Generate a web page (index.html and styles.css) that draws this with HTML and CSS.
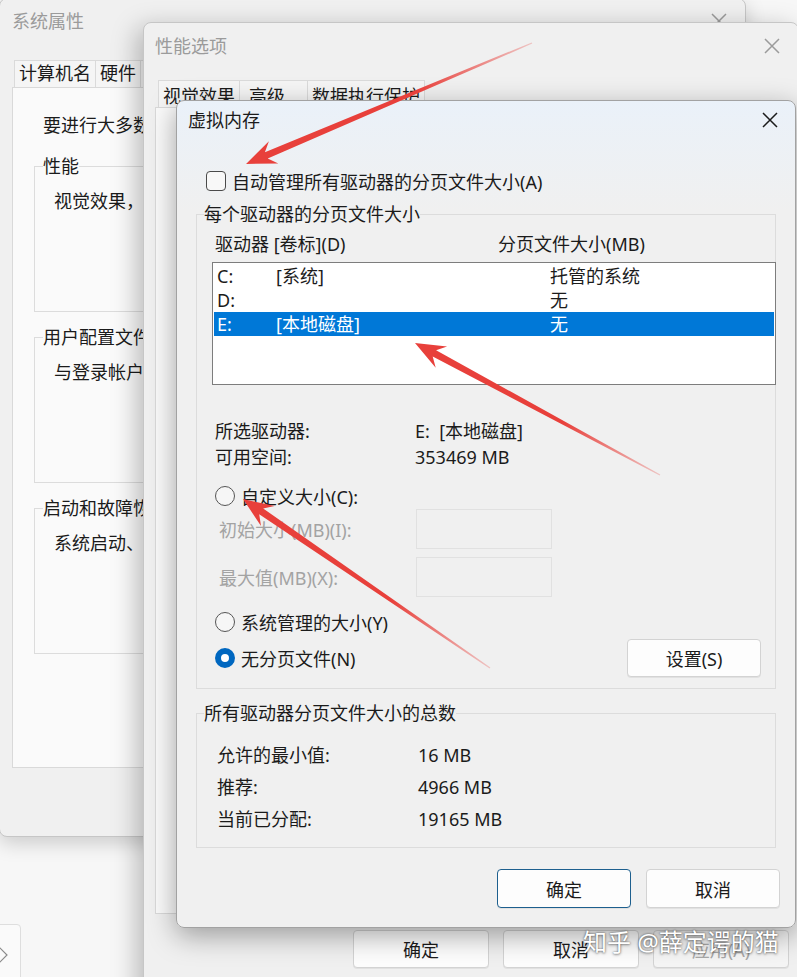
FILE: index.html
```html
<!DOCTYPE html>
<html lang="zh-CN">
  <head>
    <meta charset="UTF-8" />
    <meta name="viewport" content="width=device-width, initial-scale=1.0" />
    <title>虚拟内存</title>
    <link rel="stylesheet" href="styles.css">
  </head>
  <body>
    <div class="desktop">

      <!-- 系统属性 -->
      <div class="window inactive win-system">
        <div class="titlebar">
          <span class="title">系统属性</span>
          <svg class="close" viewBox="0 0 16 16"><path d="M1 1L15 15M15 1L1 15" /></svg>
        </div>
        <div class="tabs">
          <span class="tab">计算机名</span>
          <span class="tab">硬件</span>
          <span class="tab">高级</span>
          <span class="tab">系统保护</span>
          <span class="tab">远程</span>
        </div>
        <div class="panel">
          <p class="intro">要进行大多数更改，你必须作为管理员登录。</p>
          <fieldset class="sys-group">
            <legend>性能</legend>
            <p>视觉效果，处理器计划，内存使用，以及虚拟内存</p>
          </fieldset>
          <fieldset class="sys-group">
            <legend>用户配置文件</legend>
            <p>与登录帐户相关的桌面设置</p>
          </fieldset>
          <fieldset class="sys-group">
            <legend>启动和故障恢复</legend>
            <p>系统启动、系统故障和调试信息</p>
          </fieldset>
        </div>
      </div>

      <!-- 性能选项 -->
      <div class="window inactive win-perf">
        <div class="titlebar">
          <span class="title">性能选项</span>
          <svg class="close" viewBox="0 0 16 16"><path d="M1 1L15 15M15 1L1 15" /></svg>
        </div>
        <div class="tabs">
          <span class="tab">视觉效果</span>
          <span class="tab tab-wide">高级</span>
          <span class="tab">数据执行保护</span>
        </div>
        <div class="panel"></div>
        <div class="footer">
          <span class="btn">确定</span>
          <span class="btn">取消</span>
          <span class="btn btn-disabled">应用(A)</span>
        </div>
      </div>

      <!-- 虚拟内存 -->
      <div class="window win-vm">
        <div class="titlebar">
          <span class="title">虚拟内存</span>
          <svg class="close" viewBox="0 0 16 16"><path d="M1 1L15 15M15 1L1 15" /></svg>
        </div>
        <div class="vm-body">
          <div class="check-row">
            <span class="checkbox"></span>
            <span>自动管理所有驱动器的分页文件大小(A)</span>
          </div>

          <fieldset class="vm-group">
            <legend>每个驱动器的分页文件大小</legend>
            <div class="list-head">
              <span>驱动器 [卷标](D)</span>
              <span>分页文件大小(MB)</span>
            </div>
            <div class="listbox">
              <div class="list-row"><span>C:</span><span>[系统]</span><span>托管的系统</span></div>
              <div class="list-row"><span>D:</span><span></span><span>无</span></div>
              <div class="list-row selected"><span>E:</span><span>[本地磁盘]</span><span>无</span></div>
            </div>
            <div class="info">
              <span>所选驱动器:</span><span>E:&nbsp; [本地磁盘]</span>
              <span>可用空间:</span><span>353469 MB</span>
            </div>
            <div class="option option-custom">
              <span class="radio"></span>
              <span>自定义大小(C):</span>
            </div>
            <div class="size-row">
              <span>初始大小(MB)(I):</span>
              <span class="field"></span>
            </div>
            <div class="size-row size-row-max">
              <span>最大值(MB)(X):</span>
              <span class="field"></span>
            </div>
            <div class="option option-system">
              <span class="radio"></span>
              <span>系统管理的大小(Y)</span>
            </div>
            <div class="last-row">
              <div class="option">
                <span class="radio checked"></span>
                <span>无分页文件(N)</span>
              </div>
              <span class="btn btn-set">设置(S)</span>
            </div>
          </fieldset>

          <fieldset class="vm-group totals">
            <legend>所有驱动器分页文件大小的总数</legend>
            <div class="totals-grid">
              <span>允许的最小值:</span><span>16 MB</span>
              <span>推荐:</span><span>4966 MB</span>
              <span>当前已分配:</span><span>19165 MB</span>
            </div>
          </fieldset>

          <div class="footer vm-footer">
            <span class="btn btn-default">确定</span>
            <span class="btn">取消</span>
          </div>
        </div>
      </div>

      <!-- 左下角的按钮 -->
      <div class="corner-btn">
        <svg viewBox="0 0 41 60"><path d="M17 21L26 30L17 39" /></svg>
      </div>

      <!-- 标注箭头 -->
      <svg class="arrows" viewBox="0 0 797 977">
        <defs>
          <linearGradient id="fade1" gradientUnits="userSpaceOnUse" x1="532" y1="43" x2="246" y2="164">
            <stop offset="0" stop-color="#e8403b" stop-opacity="0.25" />
            <stop offset="0.4" stop-color="#e8403b" />
          </linearGradient>
          <linearGradient id="fade2" gradientUnits="userSpaceOnUse" x1="660" y1="475" x2="415" y2="343">
            <stop offset="0" stop-color="#e8403b" stop-opacity="0.25" />
            <stop offset="0.4" stop-color="#e8403b" />
          </linearGradient>
          <linearGradient id="fade3" gradientUnits="userSpaceOnUse" x1="490" y1="668" x2="243" y2="499">
            <stop offset="0" stop-color="#e8403b" stop-opacity="0.25" />
            <stop offset="0.4" stop-color="#e8403b" />
          </linearGradient>
        </defs>
        <polygon fill="url(#fade1)" points="531.7,42.4 264.9,152.2 268.9,141.3 246,164 278.3,163.4 267.7,158.6 532.3,43.6" />
        <polygon fill="url(#fade2)" points="660.3,474.4 436.1,350.3 447.1,346.6 415,343 435.7,367.8 432.7,356.5 659.7,475.6" />
        <polygon fill="url(#fade3)" points="490.4,667.4 263.2,508.5 274.6,506.1 243,499 261.0,525.9 259.2,514.3 489.6,668.6" />
      </svg>

      <div class="watermark">知乎 @薛定谔的猫</div>
    </div>
  </body>
</html>
```

FILE: styles.css
```css
* {
    margin: 0;
    padding: 0;
    box-sizing: border-box;
}

body {
    font-family: "Noto Sans", "Noto Sans CJK SC", sans-serif;
    font-size: 18px;
    color: #1b1b1b;
    background-color: #f7f7f7;
}

.desktop {
    position: relative;
    width: 797px;
    height: 977px;
    overflow: hidden;
    background-color: #f7f7f7;
}

/* окна */
.window {
    position: absolute;
    display: flex;
    flex-direction: column;
    background-color: #f0f0f0;
    border: 1px solid #c6c6c6;
    border-radius: 8px;
    overflow: hidden;
}

.titlebar {
    display: flex;
    align-items: center;
    justify-content: space-between;
    flex-shrink: 0;
}

.title {
    line-height: 26px;
}

.close {
    width: 16px;
    height: 16px;
    fill: none;
    stroke: currentColor;
    stroke-width: 1.5;
}

.inactive .titlebar {
    color: #9b9b9b;
}

.tabs {
    display: flex;
    flex-shrink: 0;
}

.tab {
    height: 27px;
    padding: 0 4px;
    line-height: 25px;
    border: 1px solid #dadada;
    border-bottom: none;
    background-color: #f5f5f5;
    margin-right: -1px;
}

.panel {
    flex-shrink: 0;
    background-color: #fafafa;
    border: 1px solid #d9d9d9;
}

fieldset {
    min-width: 0;
    border: 1px solid #dcdcdc;
}

legend {
    padding: 0;
    line-height: 26px;
}

.footer {
    display: flex;
    flex-shrink: 0;
}

.btn {
    display: flex;
    align-items: center;
    justify-content: center;
    width: 134px;
    height: 39px;
    background-color: #fdfdfd;
    border: 1px solid #d3d3d3;
    border-radius: 4px;
    box-shadow: 0 1px 0 rgba(0, 0, 0, 0.06);
}

.btn-disabled {
    color: #a8a8a8;
    background-color: #f5f5f5;
}

/* 系统属性 */
.win-system {
    left: -1px;
    top: -2px;
    width: 747px;
    height: 839px;
    box-shadow: 0 6px 20px rgba(0, 0, 0, 0.18);
}

.win-system .titlebar {
    height: 44px;
    padding: 0 18px 0 12px;
}

.win-system .tabs {
    margin-top: 17px;
    padding-left: 14px;
}

.win-system .panel {
    height: 681px;
    margin: 0 12px;
    padding: 24px 21px;
}

.intro {
    line-height: 26px;
    padding-left: 9px;
    white-space: nowrap;
}

.sys-group {
    height: 159px;
    margin-top: 12px;
}

.sys-group:first-of-type {
    margin-top: 15px;
}

.sys-group legend {
    margin-left: 8px;
}

.sys-group p {
    margin-top: 9px;
    padding-left: 19px;
    line-height: 26px;
    white-space: nowrap;
}

/* 性能选项 */
.win-perf {
    left: 143px;
    top: 22px;
    width: 656px;
    height: 990px;
    box-shadow: -6px 6px 26px rgba(0, 0, 0, 0.26);
}

.win-perf .titlebar {
    height: 46px;
    padding: 0 18px 0 11px;
}

.win-perf .tabs {
    margin-top: 11px;
    padding-left: 14px;
}

.win-perf .tab {
    padding-top: 3px;
}

.win-perf .tab-wide {
    width: 69px;
    padding-left: 9px;
}

.win-perf .panel {
    height: 807px;
    margin: 0 12px 0 11px;
}

.win-perf .footer {
    margin-top: 16px;
    padding-left: 209px;
    gap: 14px;
}

.win-perf .btn {
    width: 136px;
    height: 38px;
}

/* 虚拟内存 */
.win-vm {
    left: 176px;
    top: 100px;
    width: 620px;
    height: 828px;
    border-color: #a2a2a2;
    background: linear-gradient(#eaf1f9, #f0f0f0 110px);
    box-shadow: 0 8px 28px rgba(0, 0, 0, 0.35);
}

.win-vm .titlebar {
    height: 38px;
    padding: 0 17px 0 11px;
}

.vm-body {
    padding: 0 19px;
}

.check-row {
    display: flex;
    align-items: center;
    gap: 6px;
    height: 26px;
    margin-top: 29px;
    padding-left: 10px;
}

.checkbox {
    width: 20px;
    height: 20px;
    border: 1px solid #4a4a4a;
    border-radius: 4px;
    background-color: #f8f8f8;
}

.vm-group {
    margin-top: 7px;
    padding-bottom: 11px;
}

.vm-group legend {
    margin-left: 7px;
}

.list-head {
    display: grid;
    grid-template-columns: 283px 1fr;
    margin-top: 4px;
    padding-left: 18px;
    line-height: 26px;
}

.listbox {
    height: 123px;
    margin: 5px -1px 0 15px;
    padding: 1px;
    background-color: #fff;
    border: 1px solid #7d7d7d;
}

.list-row {
    display: grid;
    grid-template-columns: 59px 274px 1fr;
    height: 24px;
    padding-left: 3px;
    line-height: 24px;
}

.list-row.selected {
    background-color: #0078d7;
    color: #fff;
}

.info {
    display: grid;
    grid-template-columns: 200px 1fr;
    margin-top: 33px;
    padding-left: 18px;
    line-height: 26px;
}

.option {
    display: flex;
    align-items: center;
    gap: 6px;
    height: 26px;
    padding-left: 18px;
}

.option-custom {
    margin-top: 13px;
}

.option-system {
    margin-top: 12px;
}

.radio {
    width: 20px;
    height: 20px;
    border: 1px solid #555;
    border-radius: 50%;
    background-color: #f6f6f6;
}

.radio.checked {
    border: 6px solid #0067c0;
    background-color: #fff;
}

.size-row {
    display: grid;
    grid-template-columns: 197px 136px;
    align-items: center;
    height: 40px;
    padding-left: 22px;
    color: #a3a3a3;
}

.size-row-max {
    margin-top: 8px;
}

.field {
    height: 40px;
    border: 1px solid #e1e1e1;
    background-color: #f0f0f0;
}

.last-row {
    display: flex;
    align-items: center;
    justify-content: space-between;
    height: 38px;
    margin-top: 4px;
}

.btn-set {
    height: 38px;
    margin-right: 14px;
}

.totals {
    margin-top: 11px;
    padding-bottom: 12px;
}

.totals-grid {
    display: grid;
    grid-template-columns: 201px 1fr;
    margin-top: 13px;
    padding-left: 20px;
    line-height: 32px;
}

.vm-footer {
    justify-content: flex-end;
    gap: 15px;
    margin: 21px -4px 0 0;
}

.btn-default {
    border-color: #1d5f8e;
}

/* поверх окон */
.corner-btn {
    position: absolute;
    left: -20px;
    top: 924px;
    width: 41px;
    height: 60px;
    border: 1px solid #dedede;
    border-radius: 4px;
    background-color: #fafafa;
}

.corner-btn svg {
    width: 41px;
    height: 60px;
    fill: none;
    stroke: #8a8a8a;
    stroke-width: 1.2;
}

.arrows {
    position: absolute;
    left: 0;
    top: 0;
    width: 797px;
    height: 977px;
    pointer-events: none;
}

.watermark {
    position: absolute;
    left: 583px;
    top: 927px;
    font-size: 24px;
    line-height: 30px;
    color: #fff;
    white-space: nowrap;
    text-shadow: 0 0 2px rgba(0, 0, 0, 0.55), 0 1px 3px rgba(0, 0, 0, 0.35);
}
```
